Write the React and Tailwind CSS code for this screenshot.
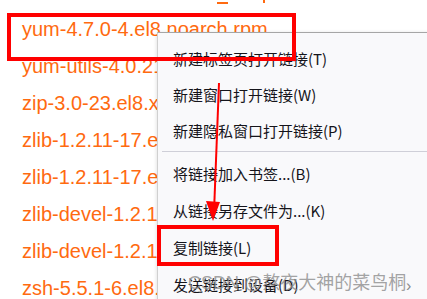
export default function App() {
  const links = [
    "yum-4.7.0-4.el8.noarch.rpm",
    "yum-utils-4.0.21-3.el8.noarch.rpm",
    "zip-3.0-23.el8.x86_64.rpm",
    "zlib-1.2.11-17.el8.i686.rpm",
    "zlib-1.2.11-17.el8.x86_64.rpm",
    "zlib-devel-1.2.11-17.el8.i686.rpm",
    "zlib-devel-1.2.11-17.el8.x86_64.rpm",
    "zsh-5.5.1-6.el8.x86_64.rpm",
  ];
  const group1 = ["新建标签页打开链接(T)", "新建窗口打开链接(W)", "新建隐私窗口打开链接(P)"];
  const group2 = ["将链接加入书签...(B)", "从链接另存文件为...(K)", "复制链接(L)", "发送链接到设备(D)"];
  return (
    <div className="relative w-[427px] h-[299px] overflow-hidden bg-white">
      <div
        className="flex flex-col pt-[11px] pl-[22px] text-[20px] leading-[37px] text-[#ff6a10] whitespace-nowrap"
        style={{ fontFamily: '"Liberation Sans", Arial, sans-serif' }}
      >
        {links.map((l) => (
          <div key={l}>{l}</div>
        ))}
      </div>
      <div className="absolute left-[217px] top-[2px] w-[11px] h-[2px] bg-[#ff6a10]" />
      <div className="absolute left-[263px] top-0 w-[2px] h-[3px] bg-[#ff6a10]" />

      <div
        className="absolute left-[157px] top-[32px] w-[300px] h-[280px] bg-[#f9f9fb] border-t border-l border-t-[#a6a6a6] border-l-[#d0d0d0] shadow-[0_1px_4px_rgba(0,0,0,0.15)] pt-[8px] text-[15px] text-[#15141a] whitespace-nowrap"
        style={{ fontFamily: '"Noto Sans CJK SC", "Liberation Sans", sans-serif' }}
      >
        {group1.map((t) => (
          <div key={t} className="h-[36px] flex items-center pl-[15px]">{t}</div>
        ))}
        <div className="mt-[2px] mb-[4px] mx-[4px] h-px bg-[#cfcfd8]" />
        {group2.map((t) => (
          <div key={t} className="h-[37px] flex items-center pl-[15px]">{t}</div>
        ))}
      </div>

      <div className="absolute left-[406px] top-[274px] text-[16px] text-[#8a8a8a]" style={{ fontFamily: '"Liberation Sans", sans-serif' }}>›</div>

      <div
        className="absolute left-[188px] top-[271px] text-[18px] leading-[24px] text-[#8c8c8c]/80 whitespace-nowrap"
        style={{ fontFamily: '"Liberation Sans", "Noto Sans CJK SC", sans-serif' }}
      >
        CSDN @熬夜大神的菜鸟桐
      </div>

      <div className="absolute left-[7px] top-[13px] w-[289px] h-[48px] border-[4px] border-[#ff0000]" />
      <div className="absolute left-[157px] top-[225px] w-[122px] h-[41px] border-[4px] border-[#ff0000]" />

      <svg className="absolute left-0 top-0" width="427" height="299">
        <line x1="219" y1="83" x2="214" y2="212" stroke="#ff0000" strokeWidth="2" />
        <polygon points="213,221 206,201 220,202" fill="#ff0000" />
      </svg>
    </div>
  );
}
